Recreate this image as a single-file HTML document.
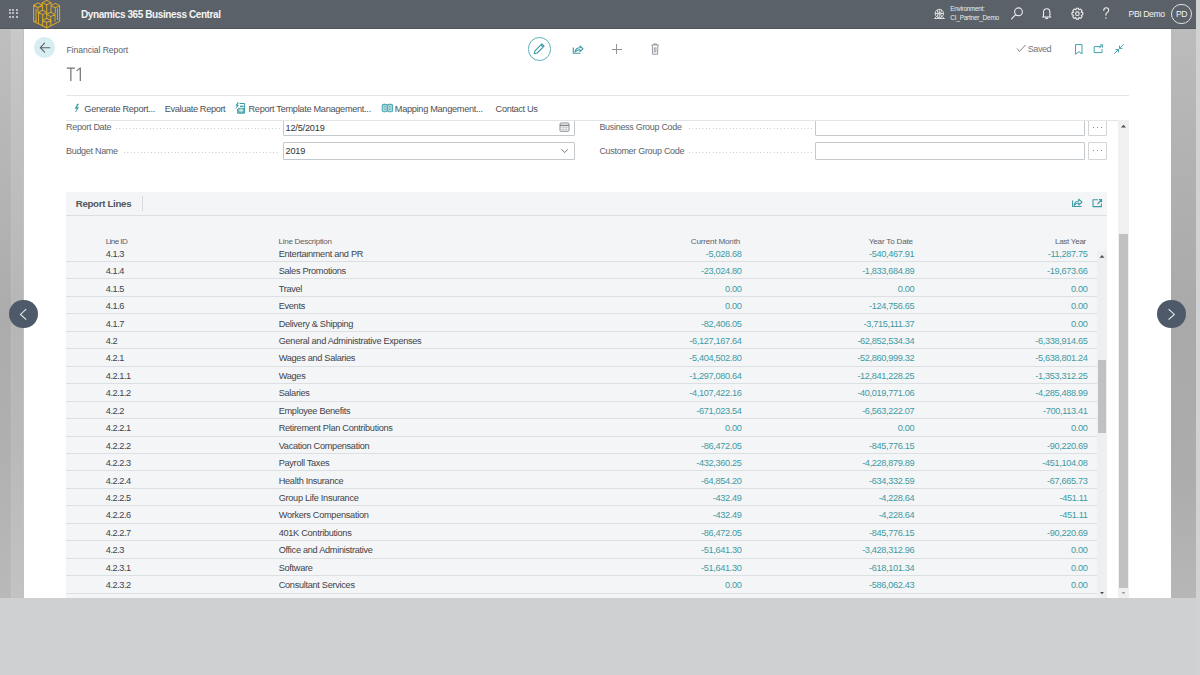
<!DOCTYPE html>
<html><head><meta charset="utf-8">
<style>
*{box-sizing:border-box;margin:0;padding:0}
html,body{width:1200px;height:675px;overflow:hidden}
body{position:relative;background:#cfd0d2;font-family:"Liberation Sans",sans-serif;color:#333}
.a{position:absolute;white-space:nowrap}
svg{position:absolute;overflow:visible}
</style></head>
<body>
<div class="a" style="left:0px;top:28px;width:11px;height:570px;background:linear-gradient(180deg,#bfbfbf 0,#b9b9b9 80px,#acacac 290px,#b0b0b0 420px,#b9b9b9 570px)"></div>
<div class="a" style="left:11px;top:28px;width:12px;height:570px;background:linear-gradient(180deg,#c8c8c8 0,#c2c2c2 80px,#b6b6b6 290px,#b9b9b9 420px,#c3c3c3 570px)"></div>
<div class="a" style="left:10.5px;top:28px;width:1.0px;height:570px;background:rgba(255,255,255,0.06)"></div>
<div class="a" style="left:22.5px;top:28px;width:1.5px;height:570px;background:linear-gradient(90deg,#a9a9a9,#d8d8d8)"></div>
<div class="a" style="left:1171px;top:28px;width:25px;height:570px;background:linear-gradient(180deg,#bcbcbc 0,#b3b3b3 110px,#a9a9a9 290px,#acacac 450px,#b7b7b7 570px)"></div>
<div class="a" style="left:1196px;top:0px;width:4px;height:675px;background:#d1d2d3"></div>
<div class="a" style="left:24px;top:28px;width:1147px;height:570px;background:#fff"></div>
<div class="a" style="left:0px;top:0px;width:1196px;height:28.5px;background:#5b6168;border-bottom:1.2px solid #4f555b"></div>
<div class="a" style="left:8.85px;top:8.85px;width:1.700000000000001px;height:1.700000000000001px;background:#dfe3e8;border-radius:0.7px;opacity:0.85"></div>
<div class="a" style="left:12.45px;top:8.85px;width:1.700000000000001px;height:1.700000000000001px;background:#dfe3e8;border-radius:0.7px;opacity:0.85"></div>
<div class="a" style="left:16.35px;top:8.85px;width:1.6999999999999993px;height:1.700000000000001px;background:#dfe3e8;border-radius:0.7px;opacity:0.85"></div>
<div class="a" style="left:8.85px;top:12.45px;width:1.700000000000001px;height:1.700000000000001px;background:#dfe3e8;border-radius:0.7px;opacity:0.85"></div>
<div class="a" style="left:12.45px;top:12.45px;width:1.700000000000001px;height:1.700000000000001px;background:#dfe3e8;border-radius:0.7px;opacity:0.85"></div>
<div class="a" style="left:16.35px;top:12.45px;width:1.6999999999999993px;height:1.700000000000001px;background:#dfe3e8;border-radius:0.7px;opacity:0.85"></div>
<div class="a" style="left:8.85px;top:16.15px;width:1.700000000000001px;height:1.7000000000000028px;background:#dfe3e8;border-radius:0.7px;opacity:0.85"></div>
<div class="a" style="left:12.45px;top:16.15px;width:1.700000000000001px;height:1.7000000000000028px;background:#dfe3e8;border-radius:0.7px;opacity:0.85"></div>
<div class="a" style="left:16.35px;top:16.15px;width:1.6999999999999993px;height:1.7000000000000028px;background:#dfe3e8;border-radius:0.7px;opacity:0.85"></div>
<svg style="left:0;top:0" width="80" height="28" viewBox="0 0 80 28"><g fill="none" stroke="#d9a628" stroke-width="1.05" stroke-linejoin="round">
<path d="M33.6 5.2 L38 2.9 L42.4 5.2 L38 7.5 Z M33.6 5.2 V21.6 L42.6 25.8 M38 7.5 V13 M36 20 V22.8 M42.4 5.2 V11"/>
<path d="M42.3 2.6 L46.7 0.4 L51.1 2.6 L46.7 4.8 Z M46.7 4.8 V12.5 M42.3 2.6 V5"/>
<path d="M51 5.6 L55.3 3.4 L59.6 5.6 L55.3 7.8 Z M59.6 5.6 V21.4 L50.8 25.8 M55.3 7.8 V13.5 M51 2.6 V12.5"/>
<path d="M38.5 12.4 L42.7 10.2 L46.9 12.4 L42.7 14.6 Z M38.5 12.4 V23.8 M42.7 14.6 V20.5 M36 8.8 V21.5"/>
<path d="M46.6 14.4 L50.8 12.2 L55 14.4 L50.8 16.6 Z M50.8 16.6 V23 M55 14.4 V21.6 M57.5 8.5 V20"/>
<path d="M42.6 20.4 L46.7 18.3 L50.8 20.4 L46.7 22.5 Z M42.6 20.4 V25.8 L46.7 28 L50.8 25.8 V20.4 M46.7 22.5 V28 M46.7 12.5 V18.3"/>
</g></svg>
<div class="a" style="top:9.54px;font-size:10px;line-height:10px;color:#f4f4f4;font-weight:bold;letter-spacing:-0.4px;left:81.00px;">Dynamics 365 Business Central</div>
<svg style="left:930px;top:5px" width="20" height="18" viewBox="0 0 20 18"><g fill="none" stroke="#e8e8e8" stroke-width="0.9">
<circle cx="9.3" cy="8.5" r="4.2"/><path d="M5.1 8.5 H13.5 M9.3 4.3 V12.7 M7 5 Q9.3 8.5 7 12 M11.6 5 Q9.3 8.5 11.6 12"/>
<path d="M6 12 L4.5 13.5 H14.5 L12.6 12"/>
</g></svg>
<div class="a" style="top:5.97px;font-size:6.3px;line-height:6.3px;color:#ececec;letter-spacing:-0.25px;left:950.30px;">Environment:</div>
<div class="a" style="top:14.80px;font-size:6.5px;line-height:6.5px;color:#ececec;letter-spacing:-0.25px;left:950.30px;">CI_Partner_Demo</div>
<svg style="left:1005px;top:0" width="115" height="28" viewBox="0 0 115 28"><g fill="none" stroke="#eeeeee" stroke-width="1.1" stroke-linecap="round">
<circle cx="13.5" cy="11.8" r="3.9"/><path d="M10.7 14.6 L6.5 18.8"/>
<path d="M38.5 17 V12.5 Q38.5 8.8 41.7 8.8 Q44.9 8.8 44.9 12.5 V17 Z M37.6 17 H45.8 M40.6 18.2 Q41.7 19.2 42.8 18.2"/>
<path d="M71.4 8.3 L73.4 8.3 L74 9.8 L75.6 9.1 L77 10.5 L76.3 12.1 L77.8 12.7 V14.7 L76.3 15.3 L77 16.9 L75.6 18.3 L74 17.6 L73.4 19.1 H71.4 L70.8 17.6 L69.2 18.3 L67.8 16.9 L68.5 15.3 L67 14.7 V12.7 L68.5 12.1 L67.8 10.5 L69.2 9.1 L70.8 9.8 Z"/>
<circle cx="72.4" cy="13.7" r="1.8"/>
<path d="M98.8 10.5 Q98.8 7.8 101.2 7.8 Q103.7 7.8 103.7 10.3 Q103.7 12 101.6 13 Q100.9 13.5 100.9 15.2"/>
</g><circle cx="100.9" cy="18" r="0.7" fill="#eeeeee"/></svg>
<div class="a" style="top:10.12px;font-size:8.6px;line-height:8.6px;color:#f2f2f2;letter-spacing:-0.4px;left:1128.60px;">PBI Demo</div>
<div class="a" style="left:1171px;top:3.6px;width:20.6px;height:20.6px;border:1px solid #dfe2e2;border-radius:50%"></div>
<div class="a" style="top:10.12px;font-size:8.6px;line-height:8.6px;color:#f2f2f2;right:19.00px;width:21px;text-align:center;right:auto;left:1171px;letter-spacing:-0.4px">PD</div>
<div class="a" style="left:33.9px;top:36.9px;width:21.4px;height:21.4px;border-radius:50%;background:#d6edf2"></div>
<svg style="left:34px;top:37.3px" width="21" height="21" viewBox="0 0 21 21"><g fill="none" stroke="#5c6065" stroke-width="1.1" stroke-linecap="round">
<path d="M6.3 10.7 H15.8 M6.3 10.7 L10.6 6.2 M6.3 10.7 L10.6 15.1"/></g></svg>
<div class="a" style="top:45.92px;font-size:8.6px;line-height:8.6px;color:#5a6069;letter-spacing:-0.05px;left:66.40px;">Financial Report</div>
<svg style="left:60px;top:60px" width="30" height="30" viewBox="60 60 30 30"><g fill="none" stroke="#707070" stroke-width="1.2">
<path d="M66.8 68.2 H74.9 M70.85 68.2 V81"/><path d="M80.3 67.6 V81 M76.6 70.9 L80.3 67.9"/></g></svg>
<div class="a" style="left:66px;top:95px;width:1063px;height:1px;background:#e6e6e6"></div>
<div class="a" style="left:527.8px;top:37.3px;width:23.6px;height:23.6px;border-radius:50%;border:1.2px solid #5aafb9"></div>
<svg style="left:527.4px;top:37.3px" width="24" height="24" viewBox="0 0 24 24"><g fill="none" stroke="#3b9aa4" stroke-width="1.1" stroke-linejoin="round">
<path d="M7.3 16.7 L8 13.8 L14.9 6.9 L17.1 9.1 L10.2 16 Z M13.9 7.9 L16.1 10.1"/></g></svg>
<svg style="left:570px;top:42px" width="16" height="14" viewBox="0 0 16 14"><g fill="none" stroke="#3b9aa4" stroke-width="1.1" stroke-linejoin="round">
<path d="M3.3 5.5 V11.2 H10.5"/><path d="M5 10 Q5.5 6 10 5.8 V4 L13 6.8 L10 9.5 V7.7 Q7 7.7 5 10 Z"/></g></svg>
<div class="a" style="left:611.9px;top:48.5px;width:10.0px;height:1.0px;background:#8f9499"></div>
<div class="a" style="left:616.4px;top:44px;width:1.0px;height:10px;background:#8f9499"></div>
<svg style="left:649px;top:42px" width="12" height="14" viewBox="0 0 12 14"><g fill="none" stroke="#8a8f95" stroke-width="0.9">
<path d="M2.3 3 H9.9 M4.8 3 V1.9 H7.4 V3 M3.3 3.2 L3.6 12.3 H8.6 L8.9 3.2 M5.3 5.2 V10.6 M6.9 5.2 V10.6"/></g></svg>
<svg style="left:1015px;top:42px" width="14" height="12" viewBox="0 0 14 12"><path d="M2 6.5 L4.5 9.5 L10.5 3" fill="none" stroke="#6d737b" stroke-width="0.9"/></svg>
<div class="a" style="top:44.88px;font-size:9px;line-height:9px;color:#70767d;letter-spacing:-0.4px;left:1027.70px;">Saved</div>
<svg style="left:1070px;top:40px" width="60" height="18" viewBox="0 0 60 18"><g fill="none" stroke="#45a2ac" stroke-width="1" stroke-linejoin="round" stroke-linecap="round">
<path d="M5.9 4.6 H12 V14 L9 11.6 L5.9 14 Z"/>
<path d="M30.5 6.6 H24.2 V12.6 H32 V9.5 M29.5 8 L32.5 5 M30.3 4.9 H32.5 V7.1"/>
<path d="M44.6 13.3 L48.5 9.5 M46 9.5 H48.5 V12 M53.3 4.6 L49.5 8.4 M49.5 6 V8.4 H52"/>
</g></svg>
<svg style="left:72px;top:102px" width="10" height="12" viewBox="0 0 10 12"><path d="M5.5 2 L3.2 6.5 L5.3 6.3 L3.6 10 L6.5 5.4 L4.6 5.6 L6.6 2 Z" fill="#3b9aa4" stroke="#3b9aa4" stroke-width="0.6" stroke-linejoin="round"/></svg>
<div class="a" style="top:104.81px;font-size:9.2px;line-height:9.2px;color:#4c5157;letter-spacing:-0.3px;left:84.30px;">Generate Report...</div>
<div class="a" style="top:104.81px;font-size:9.2px;line-height:9.2px;color:#4c5157;letter-spacing:-0.35px;left:164.70px;">Evaluate Report</div>
<svg style="left:233px;top:101px" width="15" height="14" viewBox="0 0 15 14"><g fill="none" stroke="#3b9aa4" stroke-width="1">
<path d="M6.5 2.5 H11.6 V12.2 H4.6 V8"/><path d="M7 5.3 H10.6" stroke-width="1.3"/>
<rect x="5.8" y="7.3" width="4.9" height="4" fill="#9fd0d6" stroke-width="0.9"/><path d="M5.8 9.3 H10.7 M8.2 7.3 V11.3" stroke="#e8f4f5" stroke-width="0.6"/>
<path d="M4.6 1.6 L2.9 4.6 L4.3 4.6 L3 7.4 L5.6 4 L4.2 4 L5.4 1.6 Z" fill="#3b9aa4" stroke-width="0.5"/></g></svg>
<div class="a" style="top:104.81px;font-size:9.2px;line-height:9.2px;color:#4c5157;letter-spacing:-0.3px;left:248.50px;">Report Template Management...</div>
<svg style="left:380px;top:102px" width="15" height="12" viewBox="0 0 15 12"><g fill="#b5dce0" stroke="#52aab4" stroke-width="1.1">
<rect x="2.2" y="2.4" width="5.1" height="7.3" rx="1.5"/><rect x="7.5" y="2.4" width="5.1" height="7.3" rx="1.5"/>
<path d="M3.7 4.8 H5.9 M3.7 7.2 H5.9 M9 4.8 H11.2 M9 7.2 H11.2" stroke-width="0.9"/></g></svg>
<div class="a" style="top:104.81px;font-size:9.2px;line-height:9.2px;color:#4c5157;letter-spacing:-0.3px;left:394.80px;">Mapping Mangement...</div>
<div class="a" style="top:104.81px;font-size:9.2px;line-height:9.2px;color:#4c5157;letter-spacing:-0.35px;left:495.60px;">Contact Us</div>
<div class="a" style="left:66px;top:120px;width:1063px;height:1px;background:#e3e5e7"></div>
<div class="a" style="left:24px;top:121px;width:1147px;height:70px;overflow:hidden">
<div class="a" style="left:-24px;top:-121px;width:1200px;height:300px">
<div class="a" style="top:122.68px;font-size:9px;line-height:9px;color:#5d636b;letter-spacing:-0.3px;left:66.00px;">Report Date</div>
<div class="a" style="left:116px;top:128px;width:164px;height:1px;background-image:linear-gradient(90deg,#bfc3c8 0,#bfc3c8 1px,transparent 1px);background-size:3.4px 1px;background-repeat:repeat-x"></div>
<div class="a" style="left:282.5px;top:118.5px;width:292.5px;height:17.5px;border:1px solid #c3c8cd;border-radius:1px;background:#fff"></div>
<div class="a" style="top:123.61px;font-size:9.2px;line-height:9.2px;color:#333;letter-spacing:-0.2px;left:285.50px;">12/5/2019</div>
<svg style="left:558px;top:121px" width="13" height="13" viewBox="0 0 13 13"><g fill="none" stroke="#7b8087" stroke-width="0.9">
<rect x="2" y="2" width="9" height="8.3" rx="1"/><path d="M2 4.4 H11" stroke-width="1.4"/><path d="M2.5 6.6 H10.5 M2.5 8.4 H10.5 M5 4.4 V10.3 M8 4.4 V10.3" stroke="#b3b7bc" stroke-width="0.6"/></g></svg>
<div class="a" style="top:146.68px;font-size:9px;line-height:9px;color:#5d636b;letter-spacing:-0.3px;left:66.00px;">Budget Name</div>
<div class="a" style="left:124px;top:152px;width:156px;height:1px;background-image:linear-gradient(90deg,#bfc3c8 0,#bfc3c8 1px,transparent 1px);background-size:3.4px 1px;background-repeat:repeat-x"></div>
<div class="a" style="left:282.5px;top:141.5px;width:292.5px;height:18.0px;border:1px solid #c3c8cd;border-radius:1px;background:#fff"></div>
<div class="a" style="top:147.01px;font-size:9.2px;line-height:9.2px;color:#333;letter-spacing:-0.2px;left:285.50px;">2019</div>
<svg style="left:558px;top:144px" width="13" height="13" viewBox="0 0 13 13"><path d="M3.5 5.2 L6.7 8.6 L9.9 5.2" fill="none" stroke="#6d737b" stroke-width="0.9"/></svg>
<div class="a" style="top:122.68px;font-size:9px;line-height:9px;color:#5d636b;letter-spacing:-0.3px;left:599.40px;">Business Group Code</div>
<div class="a" style="left:689px;top:128px;width:123px;height:1px;background-image:linear-gradient(90deg,#bfc3c8 0,#bfc3c8 1px,transparent 1px);background-size:3.4px 1px;background-repeat:repeat-x"></div>
<div class="a" style="left:815px;top:118.5px;width:270px;height:17.5px;border:1px solid #c3c8cd;border-radius:1px;background:#fff"></div>
<div class="a" style="left:1087.5px;top:118.5px;width:19.5px;height:17.5px;border:1px solid #d3d6d9;border-radius:1px;background:#fff"></div>
<div class="a" style="top:146.68px;font-size:9px;line-height:9px;color:#5d636b;letter-spacing:-0.3px;left:599.40px;">Customer Group Code</div>
<div class="a" style="left:689px;top:152px;width:123px;height:1px;background-image:linear-gradient(90deg,#bfc3c8 0,#bfc3c8 1px,transparent 1px);background-size:3.4px 1px;background-repeat:repeat-x"></div>
<div class="a" style="left:815px;top:141.5px;width:270px;height:18.0px;border:1px solid #c3c8cd;border-radius:1px;background:#fff"></div>
<div class="a" style="left:1087.5px;top:141.5px;width:19.5px;height:18.0px;border:1px solid #d3d6d9;border-radius:1px;background:#fff"></div>
<div class="a" style="left:1092.8000000000002px;top:126.80000000000001px;width:1.199999999999818px;height:1.1999999999999886px;background:#5e646b;border-radius:50%"></div>
<div class="a" style="left:1096.7px;top:126.80000000000001px;width:1.199999999999818px;height:1.1999999999999886px;background:#5e646b;border-radius:50%"></div>
<div class="a" style="left:1100.6000000000001px;top:126.80000000000001px;width:1.199999999999818px;height:1.1999999999999886px;background:#5e646b;border-radius:50%"></div>
<div class="a" style="left:1092.8000000000002px;top:150.20000000000002px;width:1.199999999999818px;height:1.1999999999999886px;background:#5e646b;border-radius:50%"></div>
<div class="a" style="left:1096.7px;top:150.20000000000002px;width:1.199999999999818px;height:1.1999999999999886px;background:#5e646b;border-radius:50%"></div>
<div class="a" style="left:1100.6000000000001px;top:150.20000000000002px;width:1.199999999999818px;height:1.1999999999999886px;background:#5e646b;border-radius:50%"></div>
</div></div>
<div class="a" style="left:66px;top:191.8px;width:1041px;height:406.2px;background:#f4f5f7"></div>
<div class="a" style="top:199.29px;font-size:9.7px;line-height:9.7px;color:#50565d;font-weight:bold;letter-spacing:-0.3px;left:75.70px;">Report Lines</div>
<div class="a" style="left:142px;top:196px;width:1px;height:15px;background:#d8dadd"></div>
<div class="a" style="left:66px;top:214.5px;width:1041px;height:1.1999999999999886px;background:#dcdfe2"></div>
<svg style="left:1068px;top:195px" width="40" height="15" viewBox="0 0 40 15"><g fill="none" stroke="#3b9aa4" stroke-width="1.1" stroke-linejoin="round">
<path d="M4.6 5.5 V11.5 H13.5"/><path d="M6.3 10.3 Q6.8 6.3 10.8 6 V4.2 L14 7.2 L10.8 10 V8 Q8 8 6.3 10.3 Z"/>
<path d="M30 4.7 H25 V11.6 H33.4 V8.5 M29.5 9 L33.5 5 M31 4.6 H33.6 V7.2"/></g></svg>
<div class="a" style="top:237.54px;font-size:8.1px;line-height:8.1px;color:#5c626a;letter-spacing:-0.6px;left:105.70px;">Line ID</div>
<div class="a" style="top:237.54px;font-size:8.1px;line-height:8.1px;color:#5c626a;letter-spacing:-0.3px;left:278.50px;">Line Description</div>
<div class="a" style="top:237.54px;font-size:8.1px;line-height:8.1px;color:#5c626a;letter-spacing:-0.2px;right:460.00px;">Current Month</div>
<div class="a" style="top:237.54px;font-size:8.1px;line-height:8.1px;color:#5c626a;letter-spacing:-0.2px;right:287.20px;">Year To Date</div>
<div class="a" style="top:237.54px;font-size:8.1px;line-height:8.1px;color:#5c626a;letter-spacing:-0.3px;right:114.00px;">Last Year</div>
<div class="a" style="left:66px;top:250.5px;width:1031px;height:347.5px;overflow:hidden">
<div class="a" style="left:-66px;top:-250.5px;width:1200px;height:700px">
<div class="a" style="left:66px;top:261px;width:1031px;height:1px;background:#dde0e3"></div>
<div class="a" style="top:249.71px;font-size:9.2px;line-height:9.2px;color:#3e4349;letter-spacing:-0.45px;left:105.80px;">4.1.3</div>
<div class="a" style="top:249.71px;font-size:9.2px;line-height:9.2px;color:#3e4349;letter-spacing:-0.3px;left:278.70px;">Entertainment and PR</div>
<div class="a" style="top:249.71px;font-size:9.2px;line-height:9.2px;color:#3e9ba4;letter-spacing:-0.35px;right:458.50px;">-5,028.68</div>
<div class="a" style="top:249.71px;font-size:9.2px;line-height:9.2px;color:#3e9ba4;letter-spacing:-0.35px;right:285.70px;">-540,467.91</div>
<div class="a" style="top:249.71px;font-size:9.2px;line-height:9.2px;color:#3e9ba4;letter-spacing:-0.35px;right:112.50px;">-11,287.75</div>
<div class="a" style="left:66px;top:278px;width:1031px;height:1px;background:#dde0e3"></div>
<div class="a" style="top:267.16px;font-size:9.2px;line-height:9.2px;color:#3e4349;letter-spacing:-0.45px;left:105.80px;">4.1.4</div>
<div class="a" style="top:267.16px;font-size:9.2px;line-height:9.2px;color:#3e4349;letter-spacing:-0.3px;left:278.70px;">Sales Promotions</div>
<div class="a" style="top:267.16px;font-size:9.2px;line-height:9.2px;color:#3e9ba4;letter-spacing:-0.35px;right:458.50px;">-23,024.80</div>
<div class="a" style="top:267.16px;font-size:9.2px;line-height:9.2px;color:#3e9ba4;letter-spacing:-0.35px;right:285.70px;">-1,833,684.89</div>
<div class="a" style="top:267.16px;font-size:9.2px;line-height:9.2px;color:#3e9ba4;letter-spacing:-0.35px;right:112.50px;">-19,673.66</div>
<div class="a" style="left:66px;top:296px;width:1031px;height:1px;background:#dde0e3"></div>
<div class="a" style="top:284.61px;font-size:9.2px;line-height:9.2px;color:#3e4349;letter-spacing:-0.45px;left:105.80px;">4.1.5</div>
<div class="a" style="top:284.61px;font-size:9.2px;line-height:9.2px;color:#3e4349;letter-spacing:-0.3px;left:278.70px;">Travel</div>
<div class="a" style="top:284.61px;font-size:9.2px;line-height:9.2px;color:#3e9ba4;letter-spacing:-0.35px;right:458.50px;">0.00</div>
<div class="a" style="top:284.61px;font-size:9.2px;line-height:9.2px;color:#3e9ba4;letter-spacing:-0.35px;right:285.70px;">0.00</div>
<div class="a" style="top:284.61px;font-size:9.2px;line-height:9.2px;color:#3e9ba4;letter-spacing:-0.35px;right:112.50px;">0.00</div>
<div class="a" style="left:66px;top:313px;width:1031px;height:1px;background:#dde0e3"></div>
<div class="a" style="top:302.06px;font-size:9.2px;line-height:9.2px;color:#3e4349;letter-spacing:-0.45px;left:105.80px;">4.1.6</div>
<div class="a" style="top:302.06px;font-size:9.2px;line-height:9.2px;color:#3e4349;letter-spacing:-0.3px;left:278.70px;">Events</div>
<div class="a" style="top:302.06px;font-size:9.2px;line-height:9.2px;color:#3e9ba4;letter-spacing:-0.35px;right:458.50px;">0.00</div>
<div class="a" style="top:302.06px;font-size:9.2px;line-height:9.2px;color:#3e9ba4;letter-spacing:-0.35px;right:285.70px;">-124,756.65</div>
<div class="a" style="top:302.06px;font-size:9.2px;line-height:9.2px;color:#3e9ba4;letter-spacing:-0.35px;right:112.50px;">0.00</div>
<div class="a" style="left:66px;top:331px;width:1031px;height:1px;background:#dde0e3"></div>
<div class="a" style="top:319.51px;font-size:9.2px;line-height:9.2px;color:#3e4349;letter-spacing:-0.45px;left:105.80px;">4.1.7</div>
<div class="a" style="top:319.51px;font-size:9.2px;line-height:9.2px;color:#3e4349;letter-spacing:-0.3px;left:278.70px;">Delivery &amp; Shipping</div>
<div class="a" style="top:319.51px;font-size:9.2px;line-height:9.2px;color:#3e9ba4;letter-spacing:-0.35px;right:458.50px;">-82,406.05</div>
<div class="a" style="top:319.51px;font-size:9.2px;line-height:9.2px;color:#3e9ba4;letter-spacing:-0.35px;right:285.70px;">-3,715,111.37</div>
<div class="a" style="top:319.51px;font-size:9.2px;line-height:9.2px;color:#3e9ba4;letter-spacing:-0.35px;right:112.50px;">0.00</div>
<div class="a" style="left:66px;top:348px;width:1031px;height:1px;background:#dde0e3"></div>
<div class="a" style="top:336.96px;font-size:9.2px;line-height:9.2px;color:#3e4349;letter-spacing:-0.45px;left:105.80px;">4.2</div>
<div class="a" style="top:336.96px;font-size:9.2px;line-height:9.2px;color:#3e4349;letter-spacing:-0.3px;left:278.70px;">General and Administrative Expenses</div>
<div class="a" style="top:336.96px;font-size:9.2px;line-height:9.2px;color:#3e9ba4;letter-spacing:-0.35px;right:458.50px;">-6,127,167.64</div>
<div class="a" style="top:336.96px;font-size:9.2px;line-height:9.2px;color:#3e9ba4;letter-spacing:-0.35px;right:285.70px;">-62,852,534.34</div>
<div class="a" style="top:336.96px;font-size:9.2px;line-height:9.2px;color:#3e9ba4;letter-spacing:-0.35px;right:112.50px;">-6,338,914.65</div>
<div class="a" style="left:66px;top:366px;width:1031px;height:1px;background:#dde0e3"></div>
<div class="a" style="top:354.41px;font-size:9.2px;line-height:9.2px;color:#3e4349;letter-spacing:-0.45px;left:105.80px;">4.2.1</div>
<div class="a" style="top:354.41px;font-size:9.2px;line-height:9.2px;color:#3e4349;letter-spacing:-0.3px;left:278.70px;">Wages and Salaries</div>
<div class="a" style="top:354.41px;font-size:9.2px;line-height:9.2px;color:#3e9ba4;letter-spacing:-0.35px;right:458.50px;">-5,404,502.80</div>
<div class="a" style="top:354.41px;font-size:9.2px;line-height:9.2px;color:#3e9ba4;letter-spacing:-0.35px;right:285.70px;">-52,860,999.32</div>
<div class="a" style="top:354.41px;font-size:9.2px;line-height:9.2px;color:#3e9ba4;letter-spacing:-0.35px;right:112.50px;">-5,638,801.24</div>
<div class="a" style="left:66px;top:383px;width:1031px;height:1px;background:#dde0e3"></div>
<div class="a" style="top:371.86px;font-size:9.2px;line-height:9.2px;color:#3e4349;letter-spacing:-0.45px;left:105.80px;">4.2.1.1</div>
<div class="a" style="top:371.86px;font-size:9.2px;line-height:9.2px;color:#3e4349;letter-spacing:-0.3px;left:278.70px;">Wages</div>
<div class="a" style="top:371.86px;font-size:9.2px;line-height:9.2px;color:#3e9ba4;letter-spacing:-0.35px;right:458.50px;">-1,297,080.64</div>
<div class="a" style="top:371.86px;font-size:9.2px;line-height:9.2px;color:#3e9ba4;letter-spacing:-0.35px;right:285.70px;">-12,841,228.25</div>
<div class="a" style="top:371.86px;font-size:9.2px;line-height:9.2px;color:#3e9ba4;letter-spacing:-0.35px;right:112.50px;">-1,353,312.25</div>
<div class="a" style="left:66px;top:401px;width:1031px;height:1px;background:#dde0e3"></div>
<div class="a" style="top:389.31px;font-size:9.2px;line-height:9.2px;color:#3e4349;letter-spacing:-0.45px;left:105.80px;">4.2.1.2</div>
<div class="a" style="top:389.31px;font-size:9.2px;line-height:9.2px;color:#3e4349;letter-spacing:-0.3px;left:278.70px;">Salaries</div>
<div class="a" style="top:389.31px;font-size:9.2px;line-height:9.2px;color:#3e9ba4;letter-spacing:-0.35px;right:458.50px;">-4,107,422.16</div>
<div class="a" style="top:389.31px;font-size:9.2px;line-height:9.2px;color:#3e9ba4;letter-spacing:-0.35px;right:285.70px;">-40,019,771.06</div>
<div class="a" style="top:389.31px;font-size:9.2px;line-height:9.2px;color:#3e9ba4;letter-spacing:-0.35px;right:112.50px;">-4,285,488.99</div>
<div class="a" style="left:66px;top:418px;width:1031px;height:1px;background:#dde0e3"></div>
<div class="a" style="top:406.76px;font-size:9.2px;line-height:9.2px;color:#3e4349;letter-spacing:-0.45px;left:105.80px;">4.2.2</div>
<div class="a" style="top:406.76px;font-size:9.2px;line-height:9.2px;color:#3e4349;letter-spacing:-0.3px;left:278.70px;">Employee Benefits</div>
<div class="a" style="top:406.76px;font-size:9.2px;line-height:9.2px;color:#3e9ba4;letter-spacing:-0.35px;right:458.50px;">-671,023.54</div>
<div class="a" style="top:406.76px;font-size:9.2px;line-height:9.2px;color:#3e9ba4;letter-spacing:-0.35px;right:285.70px;">-6,563,222.07</div>
<div class="a" style="top:406.76px;font-size:9.2px;line-height:9.2px;color:#3e9ba4;letter-spacing:-0.35px;right:112.50px;">-700,113.41</div>
<div class="a" style="left:66px;top:436px;width:1031px;height:1px;background:#dde0e3"></div>
<div class="a" style="top:424.21px;font-size:9.2px;line-height:9.2px;color:#3e4349;letter-spacing:-0.45px;left:105.80px;">4.2.2.1</div>
<div class="a" style="top:424.21px;font-size:9.2px;line-height:9.2px;color:#3e4349;letter-spacing:-0.3px;left:278.70px;">Retirement Plan Contributions</div>
<div class="a" style="top:424.21px;font-size:9.2px;line-height:9.2px;color:#3e9ba4;letter-spacing:-0.35px;right:458.50px;">0.00</div>
<div class="a" style="top:424.21px;font-size:9.2px;line-height:9.2px;color:#3e9ba4;letter-spacing:-0.35px;right:285.70px;">0.00</div>
<div class="a" style="top:424.21px;font-size:9.2px;line-height:9.2px;color:#3e9ba4;letter-spacing:-0.35px;right:112.50px;">0.00</div>
<div class="a" style="left:66px;top:453px;width:1031px;height:1px;background:#dde0e3"></div>
<div class="a" style="top:441.66px;font-size:9.2px;line-height:9.2px;color:#3e4349;letter-spacing:-0.45px;left:105.80px;">4.2.2.2</div>
<div class="a" style="top:441.66px;font-size:9.2px;line-height:9.2px;color:#3e4349;letter-spacing:-0.3px;left:278.70px;">Vacation Compensation</div>
<div class="a" style="top:441.66px;font-size:9.2px;line-height:9.2px;color:#3e9ba4;letter-spacing:-0.35px;right:458.50px;">-86,472.05</div>
<div class="a" style="top:441.66px;font-size:9.2px;line-height:9.2px;color:#3e9ba4;letter-spacing:-0.35px;right:285.70px;">-845,776.15</div>
<div class="a" style="top:441.66px;font-size:9.2px;line-height:9.2px;color:#3e9ba4;letter-spacing:-0.35px;right:112.50px;">-90,220.69</div>
<div class="a" style="left:66px;top:470px;width:1031px;height:1px;background:#dde0e3"></div>
<div class="a" style="top:459.11px;font-size:9.2px;line-height:9.2px;color:#3e4349;letter-spacing:-0.45px;left:105.80px;">4.2.2.3</div>
<div class="a" style="top:459.11px;font-size:9.2px;line-height:9.2px;color:#3e4349;letter-spacing:-0.3px;left:278.70px;">Payroll Taxes</div>
<div class="a" style="top:459.11px;font-size:9.2px;line-height:9.2px;color:#3e9ba4;letter-spacing:-0.35px;right:458.50px;">-432,360.25</div>
<div class="a" style="top:459.11px;font-size:9.2px;line-height:9.2px;color:#3e9ba4;letter-spacing:-0.35px;right:285.70px;">-4,228,879.89</div>
<div class="a" style="top:459.11px;font-size:9.2px;line-height:9.2px;color:#3e9ba4;letter-spacing:-0.35px;right:112.50px;">-451,104.08</div>
<div class="a" style="left:66px;top:488px;width:1031px;height:1px;background:#dde0e3"></div>
<div class="a" style="top:476.56px;font-size:9.2px;line-height:9.2px;color:#3e4349;letter-spacing:-0.45px;left:105.80px;">4.2.2.4</div>
<div class="a" style="top:476.56px;font-size:9.2px;line-height:9.2px;color:#3e4349;letter-spacing:-0.3px;left:278.70px;">Health Insurance</div>
<div class="a" style="top:476.56px;font-size:9.2px;line-height:9.2px;color:#3e9ba4;letter-spacing:-0.35px;right:458.50px;">-64,854.20</div>
<div class="a" style="top:476.56px;font-size:9.2px;line-height:9.2px;color:#3e9ba4;letter-spacing:-0.35px;right:285.70px;">-634,332.59</div>
<div class="a" style="top:476.56px;font-size:9.2px;line-height:9.2px;color:#3e9ba4;letter-spacing:-0.35px;right:112.50px;">-67,665.73</div>
<div class="a" style="left:66px;top:505px;width:1031px;height:1px;background:#dde0e3"></div>
<div class="a" style="top:494.01px;font-size:9.2px;line-height:9.2px;color:#3e4349;letter-spacing:-0.45px;left:105.80px;">4.2.2.5</div>
<div class="a" style="top:494.01px;font-size:9.2px;line-height:9.2px;color:#3e4349;letter-spacing:-0.3px;left:278.70px;">Group Life Insurance</div>
<div class="a" style="top:494.01px;font-size:9.2px;line-height:9.2px;color:#3e9ba4;letter-spacing:-0.35px;right:458.50px;">-432.49</div>
<div class="a" style="top:494.01px;font-size:9.2px;line-height:9.2px;color:#3e9ba4;letter-spacing:-0.35px;right:285.70px;">-4,228.64</div>
<div class="a" style="top:494.01px;font-size:9.2px;line-height:9.2px;color:#3e9ba4;letter-spacing:-0.35px;right:112.50px;">-451.11</div>
<div class="a" style="left:66px;top:523px;width:1031px;height:1px;background:#dde0e3"></div>
<div class="a" style="top:511.46px;font-size:9.2px;line-height:9.2px;color:#3e4349;letter-spacing:-0.45px;left:105.80px;">4.2.2.6</div>
<div class="a" style="top:511.46px;font-size:9.2px;line-height:9.2px;color:#3e4349;letter-spacing:-0.3px;left:278.70px;">Workers Compensation</div>
<div class="a" style="top:511.46px;font-size:9.2px;line-height:9.2px;color:#3e9ba4;letter-spacing:-0.35px;right:458.50px;">-432.49</div>
<div class="a" style="top:511.46px;font-size:9.2px;line-height:9.2px;color:#3e9ba4;letter-spacing:-0.35px;right:285.70px;">-4,228.64</div>
<div class="a" style="top:511.46px;font-size:9.2px;line-height:9.2px;color:#3e9ba4;letter-spacing:-0.35px;right:112.50px;">-451.11</div>
<div class="a" style="left:66px;top:540px;width:1031px;height:1px;background:#dde0e3"></div>
<div class="a" style="top:528.91px;font-size:9.2px;line-height:9.2px;color:#3e4349;letter-spacing:-0.45px;left:105.80px;">4.2.2.7</div>
<div class="a" style="top:528.91px;font-size:9.2px;line-height:9.2px;color:#3e4349;letter-spacing:-0.3px;left:278.70px;">401K Contributions</div>
<div class="a" style="top:528.91px;font-size:9.2px;line-height:9.2px;color:#3e9ba4;letter-spacing:-0.35px;right:458.50px;">-86,472.05</div>
<div class="a" style="top:528.91px;font-size:9.2px;line-height:9.2px;color:#3e9ba4;letter-spacing:-0.35px;right:285.70px;">-845,776.15</div>
<div class="a" style="top:528.91px;font-size:9.2px;line-height:9.2px;color:#3e9ba4;letter-spacing:-0.35px;right:112.50px;">-90,220.69</div>
<div class="a" style="left:66px;top:558px;width:1031px;height:1px;background:#dde0e3"></div>
<div class="a" style="top:546.36px;font-size:9.2px;line-height:9.2px;color:#3e4349;letter-spacing:-0.45px;left:105.80px;">4.2.3</div>
<div class="a" style="top:546.36px;font-size:9.2px;line-height:9.2px;color:#3e4349;letter-spacing:-0.3px;left:278.70px;">Office and Administrative</div>
<div class="a" style="top:546.36px;font-size:9.2px;line-height:9.2px;color:#3e9ba4;letter-spacing:-0.35px;right:458.50px;">-51,641.30</div>
<div class="a" style="top:546.36px;font-size:9.2px;line-height:9.2px;color:#3e9ba4;letter-spacing:-0.35px;right:285.70px;">-3,428,312.96</div>
<div class="a" style="top:546.36px;font-size:9.2px;line-height:9.2px;color:#3e9ba4;letter-spacing:-0.35px;right:112.50px;">0.00</div>
<div class="a" style="left:66px;top:575px;width:1031px;height:1px;background:#dde0e3"></div>
<div class="a" style="top:563.81px;font-size:9.2px;line-height:9.2px;color:#3e4349;letter-spacing:-0.45px;left:105.80px;">4.2.3.1</div>
<div class="a" style="top:563.81px;font-size:9.2px;line-height:9.2px;color:#3e4349;letter-spacing:-0.3px;left:278.70px;">Software</div>
<div class="a" style="top:563.81px;font-size:9.2px;line-height:9.2px;color:#3e9ba4;letter-spacing:-0.35px;right:458.50px;">-51,641.30</div>
<div class="a" style="top:563.81px;font-size:9.2px;line-height:9.2px;color:#3e9ba4;letter-spacing:-0.35px;right:285.70px;">-618,101.34</div>
<div class="a" style="top:563.81px;font-size:9.2px;line-height:9.2px;color:#3e9ba4;letter-spacing:-0.35px;right:112.50px;">0.00</div>
<div class="a" style="left:66px;top:593px;width:1031px;height:1px;background:#dde0e3"></div>
<div class="a" style="top:581.26px;font-size:9.2px;line-height:9.2px;color:#3e4349;letter-spacing:-0.45px;left:105.80px;">4.2.3.2</div>
<div class="a" style="top:581.26px;font-size:9.2px;line-height:9.2px;color:#3e4349;letter-spacing:-0.3px;left:278.70px;">Consultant Services</div>
<div class="a" style="top:581.26px;font-size:9.2px;line-height:9.2px;color:#3e9ba4;letter-spacing:-0.35px;right:458.50px;">0.00</div>
<div class="a" style="top:581.26px;font-size:9.2px;line-height:9.2px;color:#3e9ba4;letter-spacing:-0.35px;right:285.70px;">-586,062.43</div>
<div class="a" style="top:581.26px;font-size:9.2px;line-height:9.2px;color:#3e9ba4;letter-spacing:-0.35px;right:112.50px;">0.00</div>
</div></div>
<div class="a" style="left:1096.7px;top:251.3px;width:10.299999999999955px;height:346.7px;background:#efefef"></div>
<div class="a" style="left:1097.7px;top:360px;width:8.5px;height:72.5px;background:#c1c1c1"></div>
<svg style="left:1097px;top:252px" width="10" height="8" viewBox="0 0 10 8"><path d="M2.5 5.8 L5 3 L7.5 5.8 Z" fill="#505050"/></svg>
<svg style="left:1097px;top:589px" width="10" height="8" viewBox="0 0 10 8"><path d="M3 3 L5 5.3 L7 3 Z" fill="#505050"/></svg>
<div class="a" style="left:1118.4px;top:120px;width:10.599999999999909px;height:478px;background:#f0f0f0"></div>
<div class="a" style="left:1119.3px;top:234px;width:8.900000000000091px;height:354px;background:#c1c1c1"></div>
<svg style="left:1118px;top:122px" width="11" height="8" viewBox="0 0 11 8"><path d="M3 5.6 L5.5 2.8 L8 5.6 Z" fill="#505050"/></svg>
<svg style="left:1118px;top:589px" width="11" height="8" viewBox="0 0 11 8"><path d="M3.5 3 L5.5 5.3 L7.5 3 Z" fill="#a0a0a0"/></svg>
<div class="a" style="left:9.4px;top:300px;width:28.4px;height:28.4px;border-radius:50%;background:#4e5a6a"></div>
<svg style="left:9.4px;top:300px" width="28.4" height="28.4" viewBox="0 0 28 28"><path d="M17 9 L11.3 14.2 L17 19.4" fill="none" stroke="#f0f0f0" stroke-width="1"/></svg>
<div class="a" style="left:1157.3px;top:299.8px;width:28.4px;height:28.4px;border-radius:50%;background:#4e5a6a"></div>
<svg style="left:1157.3px;top:299.8px" width="28.4" height="28.4" viewBox="0 0 28 28"><path d="M11.4 9 L17.1 14.2 L11.4 19.4" fill="none" stroke="#f0f0f0" stroke-width="1"/></svg>
</body></html>
